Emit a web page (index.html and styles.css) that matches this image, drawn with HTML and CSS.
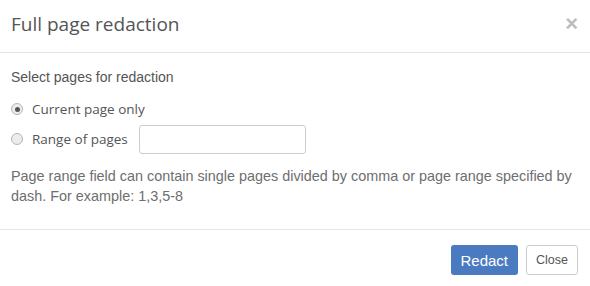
FILE: index.html
```html
<!DOCTYPE html>
<html>
<head>
<meta charset="utf-8">
<link rel="stylesheet" href="styles.css">
</head>
<body>
<div class="modal">
  <div class="modal-header">
    <h4 class="modal-title">Full page redaction</h4>
    <button class="close" type="button">&times;</button>
  </div>
  <div class="modal-body">
    <p class="intro">Select pages for redaction</p>
    <label class="radio-row">
      <input type="radio" name="pages" checked>
      <span class="radio-label">Current page only</span>
    </label>
    <label class="radio-row">
      <input type="radio" name="pages">
      <span class="radio-label">Range of pages</span>
      <input type="text" class="range-input">
    </label>
    <p class="help">Page range field can contain single pages divided by comma or page range specified by dash. For example: 1,3,5-8</p>
  </div>
  <div class="modal-footer">
    <button class="btn btn-primary" type="button">Redact</button>
    <button class="btn btn-default" type="button">Close</button>
  </div>
</div>
</body>
</html>
```
FILE: styles.css
```css
html, body {
  margin: 0;
  padding: 0;
  background: #fff;
}
body {
  font-family: "Liberation Sans", Arial, sans-serif;
  font-size: 14px;
  color: #666;
}
.modal {
  width: 590px;
}
.modal-header {
  display: flex;
  align-items: center;
  justify-content: space-between;
  height: 53px;
  box-sizing: border-box;
  padding: 0 12px 4px 11px;
  border-bottom: 1px solid #e5e5e5;
}
.modal-title {
  margin: 0;
  font-family: "Open Sans", sans-serif;
  font-weight: 400;
  font-size: 19px;
  color: #555;
}
.close {
  border: 0;
  background: none;
  padding: 0;
  font-family: "Liberation Sans", Arial, sans-serif;
  font-size: 22px;
  font-weight: 700;
  line-height: 1;
  color: #bdbdbd;
}
.modal-body {
  padding: 14px 11px 23px;
}
.intro {
  margin: 0 0 7px;
  line-height: 20px;
  color: #555;
}
.radio-row {
  display: flex;
  align-items: center;
  height: 30px;
}
.radio-row input[type=radio] {
  -webkit-appearance: none;
  appearance: none;
  margin: 0 9px 0 0;
  width: 12px;
  height: 12px;
  box-sizing: border-box;
  border: 1px solid #b5b5b5;
  border-radius: 50%;
  background: #ececec;
  display: flex;
  align-items: center;
  justify-content: center;
}
.radio-row input[type=radio]:checked::after {
  content: "";
  width: 5px;
  height: 5px;
  border-radius: 50%;
  background: #555;
}
.radio-label {
  font-family: "Open Sans", sans-serif;
  font-size: 13.5px;
  color: #555;
}
.range-input {
  margin-left: 11px;
  width: 167px;
  height: 29px;
  box-sizing: border-box;
  border: 1px solid #ccc;
  border-radius: 3px;
}
.help {
  margin: 12px 0 0;
  line-height: 20px;
  font-size: 14.4px;
  color: #6e6e6e;
}
.modal-footer {
  border-top: 1px solid #e5e5e5;
  padding: 15px 12px 11px;
  display: flex;
  justify-content: flex-end;
  gap: 8px;
}
.btn {
  font-family: "Liberation Sans", Arial, sans-serif;
  height: 30px;
  border-radius: 3px;
  border: 1px solid transparent;
}
.btn-primary {
  background: #4a7bc1;
  color: #fff;
  font-size: 15px;
  padding: 0 9px;
}
.btn-default {
  background: #fff;
  border-color: #ccc;
  color: #555;
  font-size: 12.5px;
  padding: 0 9px;
}
```
